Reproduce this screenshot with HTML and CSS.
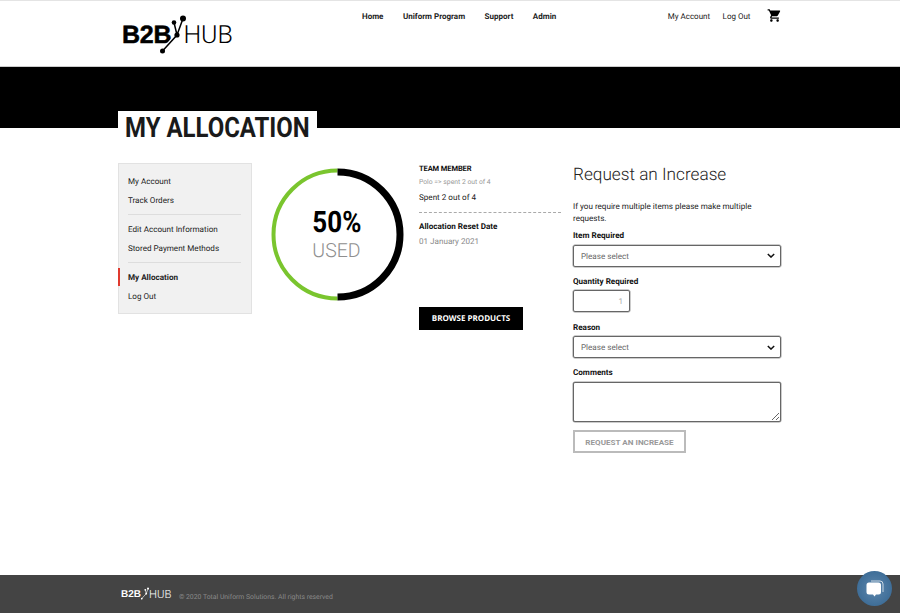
FILE: index.html
```html
<!DOCTYPE html>
<html lang="en">
<head>
<meta charset="utf-8">
<title>My Allocation</title>
<link rel="stylesheet" href="styles.css">
</head>
<body>
<header class="site-header">
  <div class="wrap header-row">
    <a class="logo" href="#">
      <span class="logo-b2b">B2B</span>
      <svg class="logo-mark" viewBox="0 0 26 39" width="26" height="39" aria-hidden="true">
        <path d="M2.500 36 L17 20 L23 3.500 M17 20 L14 7.500" fill="none" stroke="#fff" stroke-width="4"/>
        <path d="M2.500 36 L17 20 L23 3.500 M17 20 L14 7.500" fill="none" stroke="#000" stroke-width="1.500"/>
        <circle cx="2.500" cy="36" r="2.500"/><circle cx="17" cy="20" r="2.600"/><circle cx="23" cy="3.500" r="3"/><circle cx="14" cy="7.500" r="2.300"/>
      </svg>
      <span class="logo-hub">HUB</span>
    </a>
    <nav class="main-nav">
      <a href="#">Home</a><a href="#">Uniform Program</a><a href="#">Support</a><a href="#">Admin</a>
    </nav>
    <nav class="user-nav">
      <a href="#">My Account</a><a href="#">Log Out</a>
      <svg class="cart" viewBox="0 0 24 24" width="15" height="15" aria-hidden="true"><path d="M7 18c-1.100 0-1.990.9-1.990 2S5.900 22 7 22s2-.9 2-2-.9-2-2-2zM1 2v2h2l3.600 7.590-1.350 2.450c-.16.280-.25.610-.25.960 0 1.100.9 2 2 2h12v-2H7.420c-.14 0-.25-.11-.25-.25l.03-.12.9-1.630h7.450c.75 0 1.410-.41 1.750-1.030l3.580-6.490A1 1 0 0 0 20 4H5.210l-.94-2H1zm16 16c-1.100 0-1.990.9-1.990 2s.89 2 1.990 2 2-.9 2-2-.9-2-2-2z"/></svg>
    </nav>
  </div>
</header>

<section class="banner">
  <div class="wrap"><h1 class="page-title"><span>MY ALLOCATION</span></h1></div>
</section>

<main class="wrap content">
  <aside class="side-menu">
    <ul class="menu-group">
      <li><a href="#">My Account</a></li>
      <li><a href="#">Track Orders</a></li>
    </ul>
    <ul class="menu-group">
      <li><a href="#">Edit Account Information</a></li>
      <li><a href="#">Stored Payment Methods</a></li>
    </ul>
    <ul class="menu-group">
      <li class="active"><a href="#">My Allocation</a></li>
      <li><a href="#">Log Out</a></li>
    </ul>
  </aside>

  <div class="ring">
    <svg viewBox="0 0 133 133" width="133" height="133" aria-hidden="true">
      <path d="M66.500 130.500 A64 64 0 0 1 66.500 2.500" fill="none" stroke="#7ac52e" stroke-width="4"/>
      <path d="M66.500 4 A62.500 62.500 0 0 1 66.500 129" fill="none" stroke="#000" stroke-width="7"/>
    </svg>
    <div class="ring-label">
      <span class="ring-num">50%</span>
      <span class="ring-used">USED</span>
    </div>
  </div>

  <section class="info">
    <h2 class="info-title">TEAM MEMBER</h2>
    <p class="info-detail">Polo =&gt; spent 2 out of 4</p>
    <p class="info-spent">Spent 2 out of 4</p>
    <h3 class="info-head">Allocation Reset Date</h3>
    <p class="info-date">01 January 2021</p>
    <a class="btn-browse" href="#">BROWSE PRODUCTS</a>
  </section>

  <form class="request">
    <h2 class="request-title">Request an Increase</h2>
    <p class="request-note">If you require multiple items please make multiple requests.</p>
    <label class="field-label">Item Required</label>
    <div class="select-box">
      <span>Please select</span>
      <svg viewBox="0 0 10 6" width="8" height="5" aria-hidden="true"><path d="M1 1l4 4 4-4" fill="none" stroke="#111" stroke-width="1.800"/></svg>
    </div>
    <label class="field-label">Quantity Required</label>
    <div class="qty-box">1</div>
    <label class="field-label">Reason</label>
    <div class="select-box">
      <span>Please select</span>
      <svg viewBox="0 0 10 6" width="8" height="5" aria-hidden="true"><path d="M1 1l4 4 4-4" fill="none" stroke="#111" stroke-width="1.800"/></svg>
    </div>
    <label class="field-label">Comments</label>
    <textarea class="comments"></textarea>
    <button class="btn-request" type="button">REQUEST AN INCREASE</button>
  </form>
</main>

<footer class="site-footer">
  <div class="wrap footer-row">
    <span class="foot-logo"><b>B2B</b><svg viewBox="0 0 26 39" width="8" height="17" aria-hidden="true"><path d="M2.500 36 L17 20 L23 3.500 M17 20 L14 7.500" fill="none" stroke="#fff" stroke-width="2"/><circle cx="2.500" cy="36" r="3" fill="#fff"/><circle cx="17" cy="20" r="3" fill="#fff"/><circle cx="23" cy="3.500" r="3.400" fill="#fff"/><circle cx="14" cy="7.500" r="3" fill="#fff"/></svg><i>HUB</i></span>
    <span class="copyright">© 2020 Total Uniform Solutions. All rights reserved</span>
  </div>
</footer>

<div class="chat-bubble">
  <svg viewBox="0 0 20 20" width="20" height="20" aria-hidden="true">
    <path d="M6 2h9a3 3 0 0 1 3 3v8" fill="none" stroke="#fff" stroke-width="1" opacity=".7"/>
    <path d="M4 3.500h9.500a2.500 2.500 0 0 1 2.500 2.500v7a2.500 2.500 0 0 1-2.500 2.500h-2.500l-1.500 2-1.500-2h-4a2.500 2.500 0 0 1-2.500-2.500v-7a2.500 2.500 0 0 1 2.500-2.500z" fill="#fff"/>
  </svg>
</div>
</body>
</html>
```
FILE: styles.css
```css
* { box-sizing: border-box; }
html, body { margin: 0; padding: 0; }
body {
  height: 613px;
  overflow: hidden;
  display: flex;
  flex-direction: column;
  font-family: Roboto, "Liberation Sans", sans-serif;
  color: #222;
  background: #fff;
  font-size: 8.100px;
  text-rendering: geometricPrecision;
}
a { color: inherit; text-decoration: none; }
ul { list-style: none; margin: 0; padding: 0; }
h1, h2, h3, p { margin: 0; }
.wrap { width: 664px; margin-left: 118px; }

.site-header { height: 67px; border-top: 1px solid #e4e4e4; border-bottom: 1px solid #ccc; flex: none; }
.header-row { display: flex; align-items: flex-start; height: 100%; }
.logo { display: flex; align-items: flex-start; width: 244px; padding: 14px 0 0 4px; color: #000; line-height: 1; }
.logo-b2b { font-family: "Liberation Sans", sans-serif; font-weight: 700; font-size: 25px; letter-spacing: -0.2px; margin-top: 8px; -webkit-text-stroke: .5px #000; }
.logo-mark { flex: none; margin: 0 -3px 0 -11px; }
.logo-hub { font-family: Roboto, sans-serif; font-weight: 300; font-size: 25px; margin-top: 8px; }
.main-nav { display: flex; gap: 19.500px; padding-top: 10px; font-weight: 700; font-size: 8px; line-height: 12px; }
.user-nav { display: flex; gap: 12.500px; margin-left: auto; padding-top: 10px; font-size: 8px; line-height: 12px; }
.cart { margin: -3px 0 0 4px; }

.banner { height: 61px; background: #000; flex: none; }
.banner .wrap { height: 100%; position: relative; }
.page-title {
  position: absolute; left: 0; top: 44px;
  width: 199px; height: 29px; padding-left: 7px;
  background: #fff; color: #1a1a1a;
  font-family: Roboto, sans-serif;
  font-weight: 700; font-size: 28px; line-height: 33px; white-space: nowrap;
}
.page-title span { display: inline-block; transform: scaleX(.855); transform-origin: left center; }

.content { display: flex; align-items: flex-start; flex: 1; padding-top: 35px; }
.side-menu { width: 134px; height: 151px; flex: none; background: #f1f1f1; border: 1px solid #e2e2e2; padding: 8px 0 0; font-size: 8.100px; }
.menu-group { margin: 0 10px 5.500px 9px; padding: 0 0 3.500px; border-bottom: 1px solid #ddd; }
.menu-group:last-child { border: 0; }
.menu-group li { height: 19px; line-height: 19px; position: relative; }
.menu-group .active { font-weight: 700; }
.active::before { content: ""; position: absolute; left: -10px; top: 0; width: 2px; height: 18px; background: #e03a2f; }

.ring { position: relative; width: 133px; height: 133px; flex: none; margin: 5px 0 0 19px; }
.ring svg { display: block; }
.ring-label { position: absolute; inset: 0; display: flex; flex-direction: column; align-items: center; padding: 39px 2px 0 0; }
.ring-num { display: block; font-family: Roboto, sans-serif; font-weight: 700; font-size: 29.500px; line-height: 32px; color: #000; transform: scaleX(.88); }
.ring-used { font-weight: 300; font-size: 19.500px; line-height: 22px; color: #8f8f8f; margin-top: 1px; }

.info { width: 142px; flex: none; margin-left: 15px; }
.info-title { font-size: 7.500px; font-weight: 700; line-height: 11px; color: #111; letter-spacing: -.1px; }
.info-detail { font-size: 6.800px; color: #999; line-height: 10px; margin-top: 3px; }
.info-spent { font-size: 8.100px; line-height: 12px; margin-top: 4px; padding-bottom: 9px; border-bottom: 1px dashed #aaa; }
.info-head { font-size: 8.100px; font-weight: 700; line-height: 12px; margin-top: 6.500px; color: #111; }
.info-date { font-size: 8.100px; color: #888; line-height: 12px; margin-top: 3.500px; }
.btn-browse {
  display: block; width: 104px; height: 23px; margin-top: 60px;
  background: #000; color: #fff; text-align: center;
  font-family: "Open Sans", sans-serif; font-weight: 700; font-size: 8px; line-height: 24px;
}

.request { width: 208px; flex: none; margin-left: 12px; padding-top: 1px; display: flex; flex-direction: column; }
.request-title { font-weight: 300; font-size: 17.200px; line-height: 22px; color: #222; }
.request-note { font-size: 8.100px; line-height: 12px; margin-top: 14px; color: #222; }
.field-label { display: block; font-size: 8.100px; font-weight: 700; line-height: 11px; margin-top: 6px; color: #111; }
.select-box {
  display: flex; justify-content: space-between; align-items: center;
  height: 22px; margin-top: 3.500px; margin-bottom: 3px; padding: 0 5px 0 7px;
  border: 1px solid #666; border-radius: 2px; box-shadow: 0 0 0 .5px #999;
  font-size: 8.100px; color: #666;
}
.qty-box {
  width: 57px; height: 22px; margin-top: 3.500px; margin-bottom: 3.500px;
  border: 1px solid #666; border-radius: 2px; box-shadow: 0 0 0 .5px #999;
  text-align: right; padding-right: 6px; line-height: 20px; font-size: 8.100px; color: #aaa;
}
.comments {
  display: block; width: 208px; height: 40px; margin: 3.500px 0 0; padding: 0;
  border: 1px solid #666; border-radius: 2px; box-shadow: 0 0 0 .5px #999; outline: 0;
  background: #fff;
}
.btn-request {
  width: 113px; height: 23px; margin-top: 8.500px; padding: 0;
  background: #fff; border: 2px solid #bbb; color: #999;
  font-family: Roboto, sans-serif; font-weight: 700; font-size: 8.100px;
}

.site-footer { height: 38px; flex: none; background: #444; }
.footer-row { display: flex; align-items: center; height: 100%; padding: 0 0 0 3px; }
.foot-logo { display: flex; align-items: center; color: #fff; line-height: 1; margin-top: 2px; }
.foot-logo b { font-family: "Liberation Sans", sans-serif; font-weight: 700; font-size: 10px; }
.foot-logo svg { flex: none; margin-top: -3px; }
.foot-logo i { font-style: normal; font-weight: 300; font-size: 11.300px; }
.copyright { margin: 6px 0 0 7.500px; font-size: 6.850px; color: #8a8a8a; }

.chat-bubble {
  position: fixed; left: 857px; top: 571px; width: 35px; height: 35px; border-radius: 50%;
  background: radial-gradient(circle, #5d87ad 0%, #3f6e98 70%, #2f5c85 100%);
  display: flex; align-items: center; justify-content: center;
}
```
